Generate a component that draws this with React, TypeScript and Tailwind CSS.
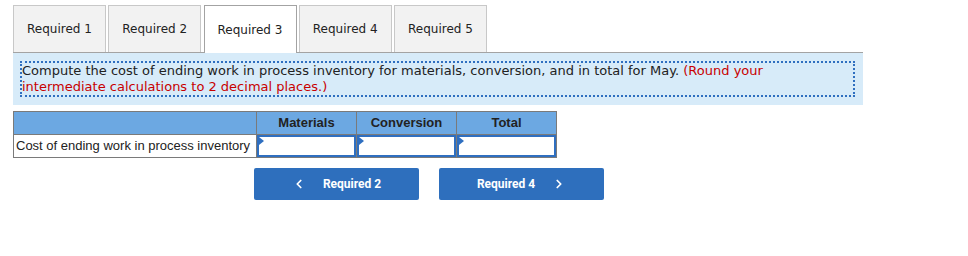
import { ChevronLeft, ChevronRight } from "lucide-react";

const tabs = ["Required 1", "Required 2", "Required 3", "Required 4", "Required 5"];

export default function App() {
  return (
    <div className="min-h-[256px] bg-white pl-[13px] pt-[5px]">
      <div className="w-[850px]">
        {/* tab strip */}
        <div className="flex gap-[2.25px] border-b border-[#a3a3a3]">
          {tabs.map((tab, i) => (
            <div
              key={tab}
              className={
                i === 2
                  ? "-mb-px flex h-[48px] w-[93px] items-center justify-center border border-b-0 border-[#a3a3a3] bg-white font-['DejaVu_Sans',sans-serif] text-[12px] text-[#222]"
                  : "flex h-[47px] w-[93px] items-center justify-center border border-b-0 border-[#c8c8c8] bg-[#f2f2f2] font-['DejaVu_Sans',sans-serif] text-[12px] text-[#222]"
              }
            >
              {tab}
            </div>
          ))}
        </div>

        {/* instructions */}
        <div className="bg-[#d7ebf9] pb-[8px] pl-[7px] pr-[8px] pt-[8px]">
          <p className="border-2 border-dotted border-[#2f6fc0] pr-[24px] font-['DejaVu_Sans',sans-serif] text-[13px] leading-[16px] text-[#222]">
            Compute the cost of ending work in process inventory for materials, conversion, and in total for May.{" "}
            <span className="text-[#c80000]">
              (Round your intermediate calculations to 2 decimal places.)
            </span>
          </p>
        </div>
      </div>

      {/* answer table */}
      <table className="mt-[6px] border-collapse font-['Liberation_Sans',Arial,sans-serif]">
        <thead>
          <tr className="h-[23px] bg-[#6ca8e2]">
            <th className="w-[243px] border border-[#7a7a7a]" />
            {["Materials", "Conversion", "Total"].map((h) => (
              <th key={h} className="w-[100px] border border-[#7a7a7a] text-[13px] font-bold text-[#222]">
                {h}
              </th>
            ))}
          </tr>
        </thead>
        <tbody>
          <tr className="h-[23px]">
            <td className="border border-[#7a7a7a] pl-[2px] text-[13px] text-[#222]">
              Cost of ending work in process inventory
            </td>
            {[0, 1, 2].map((k) => (
              <td key={k} className="border border-[#7a7a7a] p-0">
                <div className="relative h-[22px] w-full border-2 border-[#2f6fc0] bg-white">
                  <span className="absolute left-0 top-0 h-0 w-0 border-b-[4px] border-l-[5px] border-t-[4px] border-b-transparent border-l-[#2f6fc0] border-t-transparent" />
                </div>
              </td>
            ))}
          </tr>
        </tbody>
      </table>

      {/* navigation */}
      <div className="ml-[241px] mt-[10px] flex gap-[20px] font-['Roboto',sans-serif] text-[12px] font-bold text-white">
        <button
          type="button"
          className="flex h-[32px] w-[165px] items-center justify-center gap-[17px] rounded-[2px] bg-[#2e6fbd]"
        >
          <ChevronLeft size={14} strokeWidth={3} />
          Required 2
        </button>
        <button
          type="button"
          className="flex h-[32px] w-[165px] items-center justify-center gap-[17px] rounded-[2px] bg-[#2e6fbd]"
        >
          Required 4
          <ChevronRight size={14} strokeWidth={3} />
        </button>
      </div>
    </div>
  );
}
